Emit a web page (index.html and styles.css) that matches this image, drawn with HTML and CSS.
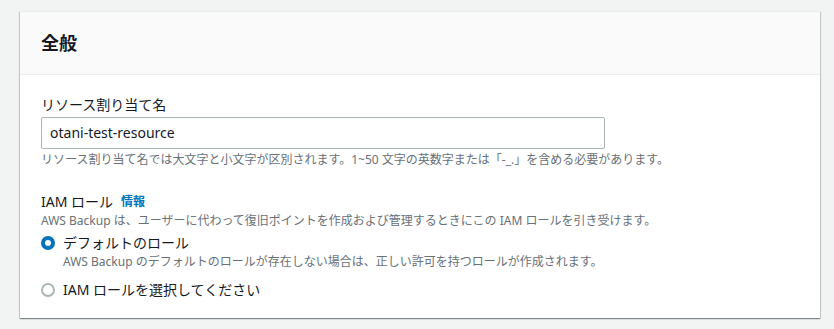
FILE: index.html
```html
<!DOCTYPE html>
<html lang="ja">
<head>
<meta charset="utf-8">
<link rel="stylesheet" href="styles.css">
</head>
<body>
<div class="page">
  <section class="card">
    <header class="card-header"><h2>全般</h2></header>
    <div class="card-body">
      <div class="field">
        <label class="label">リソース割り当て名</label>
        <div class="input">otani-test-resource</div>
        <div class="hint">リソース割り当て名では大文字と小文字が区別されます。1~50 文字の英数字または「-_.」を含める必要があります。</div>
      </div>
      <div class="field field-iam">
        <div class="label">IAM ロール <span class="info">情報</span></div>
        <div class="desc">AWS Backup は、ユーザーに代わって復旧ポイントを作成および管理するときにこの IAM ロールを引き受けます。</div>
        <div class="radios">
          <div class="radio-row">
            <span class="radio checked"></span>
            <div class="radio-text">
              <div class="radio-label">デフォルトのロール</div>
              <div class="radio-desc">AWS Backup のデフォルトのロールが存在しない場合は、正しい許可を持つロールが作成されます。</div>
            </div>
          </div>
          <div class="radio-row">
            <span class="radio"></span>
            <div class="radio-text">
              <div class="radio-label">IAM ロールを選択してください</div>
            </div>
          </div>
        </div>
      </div>
    </div>
  </section>
</div>
</body>
</html>
```
FILE: styles.css
```css
html, body {
  margin: 0;
  padding: 0;
  background: #f2f3f3;
}
body {
  font-family: "Noto Sans", "Noto Sans CJK JP", sans-serif;
  color: #16191f;
}
.page {
  padding: 11px 14px 10px 20px;
}
.card {
  background: #fff;
  border-top: 1px solid #eaeded;
  box-shadow: 0 1px 1px 0 rgba(0,28,36,.3), 1px 1px 1px 0 rgba(0,28,36,.15), -1px 1px 1px 0 rgba(0,28,36,.15);
  height: 307px;
  box-sizing: border-box;
}
.card-header {
  background: #fafafa;
  border-bottom: 1px solid #eaeded;
  height: 63px;
  box-sizing: border-box;
  display: flex;
  align-items: center;
  padding: 0 21px;
}
.card-header h2 {
  margin: 0;
  font-size: 18px;
  font-weight: 700;
  line-height: 22px;
}
.card-body {
  padding: 19px 21px 0;
}
.field {
  display: flex;
  flex-direction: column;
}
.label {
  font-size: 14px;
  line-height: 22px;
  margin-bottom: 1px;
}
.input {
  width: 564px;
  height: 32px;
  box-sizing: border-box;
  border: 1px solid #aab7b8;
  border-radius: 2px;
  padding: 0 8px;
  font-size: 14px;
  line-height: 30px;
}
.hint, .desc, .radio-desc {
  font-size: 12px;
  line-height: 16px;
  color: #687078;
}
.hint {
  margin-top: 3px;
}
.field-iam {
  margin-top: 23px;
}
.field-iam .label {
  margin-bottom: 0;
  display: flex;
  align-items: center;
  gap: 8px;
}
.info {
  color: #0073bb;
  font-weight: 700;
  font-size: 12px;
}
.radios {
  display: flex;
  flex-direction: column;
  gap: 9px;
  margin-top: 3px;
}
.radio-row {
  display: flex;
  align-items: flex-start;
  gap: 8px;
}
.radio {
  width: 14px;
  height: 14px;
  box-sizing: border-box;
  border-radius: 50%;
  border: 2px solid #aab7b8;
  margin-top: 4px;
  flex: none;
}
.radio.checked {
  border: 4px solid #0073bb;
  background: #fff;
}
.radio-label {
  font-size: 14px;
  line-height: 22px;
}
```
